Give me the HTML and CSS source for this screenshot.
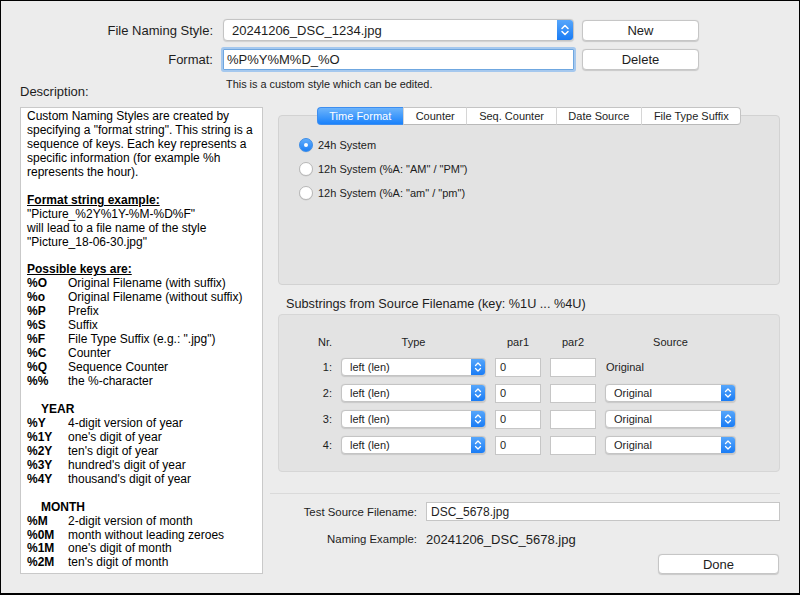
FILE: index.html
```html
<!DOCTYPE html>
<html>
<head>
<meta charset="utf-8">
<link rel="stylesheet" href="styles.css">
</head>
<body>
<div class="window">
  <div class="top">
    <div class="row row1">
      <div class="lbl">File Naming Style:</div>
      <div class="popup big">
        <span class="ptext">20241206_DSC_1234.jpg</span>
        <span class="parrow"><svg width="16" height="20" viewBox="0 0 16 20"><path d="M5 8.5 L8 5.5 L11 8.5 M5 11.5 L8 14.5 L11 11.5" fill="none" stroke="#fff" stroke-width="1.5" stroke-linecap="round" stroke-linejoin="round"/></svg></span>
      </div>
      <div class="btn topbtn">New</div>
    </div>
    <div class="row row2">
      <div class="lbl">Format:</div>
      <div class="field focus">%P%Y%M%D_%O</div>
      <div class="btn topbtn">Delete</div>
    </div>
    <div class="row row3">
      <div class="desclabel">Description:</div>
      <div class="note">This is a custom style which can be edited.</div>
    </div>
  </div>

  <div class="main">
    <div class="descbox">
      <div>Custom Naming Styles are created by</div>
      <div>specifying a "format string". This string is a</div>
      <div>sequence of keys. Each key represents a</div>
      <div>specific information (for example %h</div>
      <div>represents the hour).</div>
      <div class="blank"></div>
      <div class="hd">Format string example:</div>
      <div>"Picture_%2Y%1Y-%M-%D%F"</div>
      <div>will lead to a file name of the style</div>
      <div>"Picture_18-06-30.jpg"</div>
      <div class="blank"></div>
      <div class="hd">Possible keys are:</div>
      <div class="k"><b>%O</b>Original Filename (with suffix)</div>
      <div class="k"><b>%o</b>Original Filename (without suffix)</div>
      <div class="k"><b>%P</b>Prefix</div>
      <div class="k"><b>%S</b>Suffix</div>
      <div class="k"><b>%F</b>File Type Suffix (e.g.: ".jpg")</div>
      <div class="k"><b>%C</b>Counter</div>
      <div class="k"><b>%Q</b>Sequence Counter</div>
      <div class="k"><b>%%</b>the %-character</div>
      <div class="blank"></div>
      <div class="sec">YEAR</div>
      <div class="k"><b>%Y</b>4-digit version of year</div>
      <div class="k"><b>%1Y</b>one's digit of year</div>
      <div class="k"><b>%2Y</b>ten's digit of year</div>
      <div class="k"><b>%3Y</b>hundred's digit of year</div>
      <div class="k"><b>%4Y</b>thousand's digit of year</div>
      <div class="blank"></div>
      <div class="sec">MONTH</div>
      <div class="k"><b>%M</b>2-digit version of month</div>
      <div class="k"><b>%0M</b>month without leading zeroes</div>
      <div class="k"><b>%1M</b>one's digit of month</div>
      <div class="k"><b>%2M</b>ten's digit of month</div>
    </div>

    <div class="right">
      <div class="tabview">
        <div class="tabbox">
          <div class="tabs">
            <div class="tab sel">Time Format</div>
            <div class="tab">Counter</div>
            <div class="tab">Seq. Counter</div>
            <div class="tab">Date Source</div>
            <div class="tab">File Type Suffix</div>
          </div>
          <div class="radios">
            <div class="radio-row"><span class="radio on"></span>24h System</div>
            <div class="radio-row"><span class="radio"></span>12h System (%A: "AM" / "PM")</div>
            <div class="radio-row"><span class="radio"></span>12h System (%A: "am" / "pm")</div>
          </div>
        </div>
      </div>

      <div class="subhead">Substrings from Source Filename (key: %1U ... %4U)</div>
      <div class="group">
        <div class="grid">
          <div class="h nr">Nr.</div>
          <div class="h">Type</div>
          <div class="h">par1</div>
          <div class="h">par2</div>
          <div class="h">Source</div>

          <div class="nr">1:</div>
          <div class="popup sm"><span class="ptext">left (len)</span><span class="parrow"><svg width="14" height="18" viewBox="0 0 14 18"><path d="M4.5 7.5 L7 5 L9.5 7.5 M4.5 10.5 L7 13 L9.5 10.5" fill="none" stroke="#fff" stroke-width="1.3" stroke-linecap="round" stroke-linejoin="round"/></svg></span></div>
          <div class="tfield">0</div>
          <div class="tfield"></div>
          <div class="plain">Original</div>

          <div class="nr">2:</div>
          <div class="popup sm"><span class="ptext">left (len)</span><span class="parrow"><svg width="14" height="18" viewBox="0 0 14 18"><path d="M4.5 7.5 L7 5 L9.5 7.5 M4.5 10.5 L7 13 L9.5 10.5" fill="none" stroke="#fff" stroke-width="1.3" stroke-linecap="round" stroke-linejoin="round"/></svg></span></div>
          <div class="tfield">0</div>
          <div class="tfield"></div>
          <div class="popup sm"><span class="ptext">Original</span><span class="parrow"><svg width="14" height="18" viewBox="0 0 14 18"><path d="M4.5 7.5 L7 5 L9.5 7.5 M4.5 10.5 L7 13 L9.5 10.5" fill="none" stroke="#fff" stroke-width="1.3" stroke-linecap="round" stroke-linejoin="round"/></svg></span></div>

          <div class="nr">3:</div>
          <div class="popup sm"><span class="ptext">left (len)</span><span class="parrow"><svg width="14" height="18" viewBox="0 0 14 18"><path d="M4.5 7.5 L7 5 L9.5 7.5 M4.5 10.5 L7 13 L9.5 10.5" fill="none" stroke="#fff" stroke-width="1.3" stroke-linecap="round" stroke-linejoin="round"/></svg></span></div>
          <div class="tfield">0</div>
          <div class="tfield"></div>
          <div class="popup sm"><span class="ptext">Original</span><span class="parrow"><svg width="14" height="18" viewBox="0 0 14 18"><path d="M4.5 7.5 L7 5 L9.5 7.5 M4.5 10.5 L7 13 L9.5 10.5" fill="none" stroke="#fff" stroke-width="1.3" stroke-linecap="round" stroke-linejoin="round"/></svg></span></div>

          <div class="nr">4:</div>
          <div class="popup sm"><span class="ptext">left (len)</span><span class="parrow"><svg width="14" height="18" viewBox="0 0 14 18"><path d="M4.5 7.5 L7 5 L9.5 7.5 M4.5 10.5 L7 13 L9.5 10.5" fill="none" stroke="#fff" stroke-width="1.3" stroke-linecap="round" stroke-linejoin="round"/></svg></span></div>
          <div class="tfield">0</div>
          <div class="tfield"></div>
          <div class="popup sm"><span class="ptext">Original</span><span class="parrow"><svg width="14" height="18" viewBox="0 0 14 18"><path d="M4.5 7.5 L7 5 L9.5 7.5 M4.5 10.5 L7 13 L9.5 10.5" fill="none" stroke="#fff" stroke-width="1.3" stroke-linecap="round" stroke-linejoin="round"/></svg></span></div>
        </div>
      </div>

      <div class="sep"></div>

      <div class="frow test">
        <div class="flbl">Test Source Filename:</div>
        <div class="tfield wide">DSC_5678.jpg</div>
      </div>
      <div class="frow example">
        <div class="flbl">Naming Example:</div>
        <div class="exval">20241206_DSC_5678.jpg</div>
      </div>
      <div class="donerow">
        <div class="btn done">Done</div>
      </div>
    </div>
  </div>
</div>
</body>
</html>
```

FILE: styles.css
```css
* { box-sizing: border-box; }
body {
  margin: 0;
  font-family: "Liberation Sans", Arial, Helvetica, sans-serif;
  color: #1d1d1d;
}
.window {
  width: 800px;
  height: 595px;
  border: 1px solid #000;
  border-bottom-width: 2px;
  background: #ececec;
  overflow: hidden;
}

/* ---------- top ---------- */
.top { padding-top: 18px; }
.row { display: flex; align-items: center; }
.row1, .row2 { height: 22px; }
.row2 { margin-top: 7px; }
.lbl {
  width: 212px;
  text-align: right;
  font-size: 13px;
}
.popup {
  display: flex;
  align-items: stretch;
  background: #fff;
  border: 1px solid #c4c4c4;
  border-radius: 4px;
  box-shadow: 0 0.5px 1px rgba(0,0,0,0.12);
  overflow: hidden;
}
.popup .ptext { flex: 1; display: flex; align-items: center; }
.popup .parrow {
  display: flex;
  align-items: center;
  justify-content: center;
  background: linear-gradient(#56a6fb, #1a7cf5);
}
.popup.big {
  margin-left: 10px;
  width: 351px;
  height: 22px;
  font-size: 13px;
}
.popup.big .ptext { padding-left: 8px; }
.popup.big .parrow { width: 16px; }

.btn {
  background: #fff;
  border: 1px solid #c6c6c6;
  border-radius: 4px;
  box-shadow: 0 0.5px 1px rgba(0,0,0,0.15);
  display: flex;
  align-items: center;
  justify-content: center;
  font-size: 13px;
  color: #1d1d1d;
}
.topbtn {
  margin-left: 8px;
  width: 117px;
  height: 21px;
}
.field {
  margin-left: 10px;
  width: 351px;
  height: 21px;
  background: #fff;
  font-size: 13px;
  padding-left: 3px;
  display: flex;
  align-items: center;
}
.field.focus {
  border: 1px solid #6fa7e0;
  box-shadow: 0 0 0 2px #a5c8ee;
  border-radius: 1px;
}
.row3 { margin-top: 8px; align-items: flex-start; }
.desclabel {
  margin-left: 19px;
  width: 206px;
  margin-top: 6px;
  font-size: 13px;
  line-height: 16px;
}
.note {
  font-size: 10.9px;
  line-height: 12px;
  color: #222;
}

/* ---------- main ---------- */
.main {
  display: flex;
  padding-left: 19px;
  margin-top: 7px;
}
.descbox {
  width: 243px;
  height: 467px;
  background: #fff;
  border: 1px solid #c9c9c9;
  padding: 2px 0 0 6px;
  font-size: 12px;
  line-height: 13.95px;
  color: #000;
  white-space: nowrap;
  overflow: hidden;
}
.descbox .blank { height: 13.95px; }
.descbox .hd { font-weight: bold; text-decoration: underline; }
.descbox .sec { font-weight: bold; padding-left: 14px; }
.descbox .k b { display: inline-block; width: 41px; }

.right {
  margin-left: 15px;
  width: 502px;
}

/* tab view */
.tabview { padding-top: 8px; }
.tabbox {
  height: 170px;
  background: #e3e3e3;
  border: 1px solid #d2d2d2;
  border-radius: 4px;
}
.tabs {
  display: flex;
  justify-content: center;
  margin-top: -9px;
}
.tab {
  height: 18px;
  padding: 0 11.7px;
  font-size: 11px;
  display: flex;
  align-items: center;
  background: #fff;
  border-top: 1px solid #c4c4c4;
  border-bottom: 1px solid #b9b9b9;
  border-left: 1px solid #d6d6d6;
  color: #1d1d1d;
}
.tab:first-child { border-left: 1px solid #c4c4c4; border-radius: 4px 0 0 4px; }
.tab:last-child { border-right: 1px solid #c4c4c4; border-radius: 0 4px 4px 0; }
.tab.sel {
  background: linear-gradient(#6db4fb, #1a82fb);
  color: #fff;
  border-color: #3d8ef0;
}
.radios { padding: 8px 0 0 20px; }
.radio-row {
  height: 24px;
  display: flex;
  align-items: center;
  font-size: 11px;
}
.radio {
  width: 14px;
  height: 14px;
  border-radius: 50%;
  background: #fff;
  border: 1px solid #b8b8b8;
  margin-right: 5px;
  box-shadow: 0 0.5px 0.5px rgba(0,0,0,0.1);
  display: flex;
  align-items: center;
  justify-content: center;
}
.radio.on {
  background: linear-gradient(#62adfb, #1e80f5);
  border-color: #3b8de8;
}
.radio.on::after {
  content: "";
  width: 4px;
  height: 4px;
  border-radius: 50%;
  background: #fff;
}

/* substrings */
.subhead {
  margin-top: 11px;
  padding-left: 8px;
  font-size: 12.7px;
  line-height: 16px;
}
.group {
  margin-top: 2px;
  height: 158px;
  background: #e3e3e3;
  border: 1px solid #d6d6d6;
  border-radius: 4px;
  padding-top: 19px;
}
.grid {
  display: grid;
  grid-template-columns: 53px 145px 46px 46px 131px;
  column-gap: 9px;
  row-gap: 8px;
  grid-template-rows: 16px 18px 18px 18px 18px;
  font-size: 11px;
  align-items: center;
}
.grid .h { text-align: center; }
.grid .nr { text-align: right; }
.popup.sm { height: 18px; font-size: 11px; }
.popup.sm .ptext { padding-left: 8px; }
.popup.sm .parrow { width: 14px; }
.tfield {
  height: 19px;
  background: #fff;
  border: 1px solid #c6c6c6;
  font-size: 11px;
  padding-left: 4px;
  display: flex;
  align-items: center;
}
.plain { padding-left: 1px; font-size: 11px; }

.sep {
  margin-top: 21px;
  margin-left: -8px;
  height: 1px;
  background: #dadada;
}
.frow {
  display: flex;
  align-items: center;
}
.flbl {
  width: 139px;
  text-align: right;
  font-size: 11.4px;
  margin-right: 9px;
}
.test { margin-top: 8px; height: 19px; }
.tfield.wide { width: 354px; font-size: 12px; }
.example { margin-top: 8px; height: 20px; }
.exval { font-size: 13px; }
.donerow {
  display: flex;
  justify-content: flex-end;
  margin-top: 5px;
  padding-right: 1px;
}
.btn.done { width: 121px; height: 20px; font-size: 13px; }
```
